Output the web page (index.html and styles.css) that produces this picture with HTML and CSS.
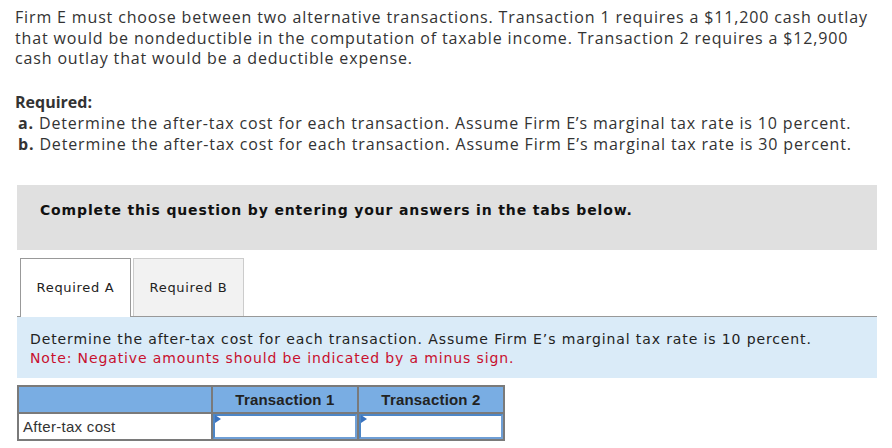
FILE: index.html
```html
<!DOCTYPE html>
<html lang="en">
<head>
    <meta charset="UTF-8">
    <title>Firm E - after-tax cost</title>
    <link rel="stylesheet" href="styles.css">
</head>
<body>
    <!-- Enunciado -->
    <div class="enunciado">
        <p class="texto">Firm E must choose between two alternative transactions. Transaction 1 requires a $11,200 cash outlay that would be nondeductible in the computation of taxable income. Transaction 2 requires a $12,900 cash outlay that would be a deductible expense.</p>

        <p class="requerido">Required:</p>
        <p class="item"><b>a.</b> Determine the after-tax cost for each transaction. Assume Firm E’s marginal tax rate is 10 percent.</p>
        <p class="item"><b>b.</b> Determine the after-tax cost for each transaction. Assume Firm E’s marginal tax rate is 30 percent.</p>
    </div>

    <div class="aviso">
        Complete this question by entering your answers in the tabs below.
    </div>

    <!-- Pestañas -->
    <div class="tabs">
        <button class="tab activa">Required A</button>
        <button class="tab">Required B</button>
    </div>

    <div class="panel">
        <p>Determine the after-tax cost for each transaction. Assume Firm E’s marginal tax rate is 10 percent.</p>
        <p class="nota">Note: Negative amounts should be indicated by a minus sign.</p>
    </div>

    <table class="tabla">
        <thead>
            <tr>
                <th class="col-label"></th>
                <th>Transaction 1</th>
                <th>Transaction 2</th>
            </tr>
        </thead>
        <tbody>
            <tr>
                <td class="col-label">After-tax cost</td>
                <td class="celda"><input type="text"></td>
                <td class="celda"><input type="text"></td>
            </tr>
        </tbody>
    </table>
</body>
</html>
```

FILE: styles.css
```css
body {
    margin: 0;
    padding: 7px 15px 0 15px;
    background: #fff;
    color: #333;
    font-family: 'Open Sans', sans-serif;
}

.enunciado p {
    margin: 0;
}

.texto {
    font-size: 16px;
    line-height: 20.5px;
    letter-spacing: 0.85px;
    width: 872px;
}

.requerido {
    font-weight: bold;
    font-size: 16px;
    margin-top: 22px !important;
    line-height: 22px;
}

.item {
    font-size: 16px;
    line-height: 21px;
    letter-spacing: 0.85px;
    padding-left: 3px;
}

.aviso {
    margin: 30px 0 0 2px;
    width: 860px;
    height: 65px;
    box-sizing: border-box;
    padding: 17px 0 0 23px;
    background: #e0e0e0;
    font-family: 'DejaVu Sans', Verdana, sans-serif;
    font-weight: bold;
    font-size: 14px;
    letter-spacing: 0.85px;
    color: #111;
}

.tabs {
    display: flex;
    gap: 2px;
    margin: 8px 0 0 5px;
}

.tab {
    width: 111px;
    height: 58px;
    border: 1px solid #ccc;
    border-bottom: none;
    background: #f2f2f2;
    font-family: 'DejaVu Sans', Verdana, sans-serif;
    font-size: 13px;
    letter-spacing: 0.7px;
    color: #222;
    padding: 0;
}

.tab.activa {
    background: #fff;
    border-color: #999;
    height: 59px;
    margin-bottom: -1px;
    position: relative;
}

.panel {
    margin-left: 2px;
    width: 860px;
    height: 62px;
    box-sizing: border-box;
    border-top: 1px solid #999;
    background: #daebf8;
    padding: 13px 0 0 13px;
    font-family: 'DejaVu Sans', Verdana, sans-serif;
    font-size: 14px;
    line-height: 19px;
    letter-spacing: 0.88px;
    color: #222;
}

.panel p {
    margin: 0;
}

.nota {
    color: #c8102e;
}

.tabla {
    margin: 7px 0 0 2px;
    border-collapse: collapse;
    font-family: 'Liberation Sans', Arial, sans-serif;
    font-size: 15px;
}

.tabla th,
.tabla td {
    border: 2px solid #7a7a7a;
    padding: 0;
}

.tabla th {
    background: #79ade3;
    height: 25px;
    width: 144px;
    color: #222;
    font-weight: bold;
    letter-spacing: 0.2px;
}

.tabla th.col-label {
    width: 192px;
}

.tabla td {
    height: 25px;
}

.tabla td.col-label {
    padding-left: 4px;
    color: #333;
    letter-spacing: 0.3px;
}

.celda {
    position: relative;
}

.celda input {
    display: block;
    width: 100%;
    height: 25px;
    box-sizing: border-box;
    border: 2px solid #4d86c6;
    border-color: #4d86c6 #6f9fd6 #6f9fd6 #4d86c6;
    outline: none;
    margin: 0;
}

.celda::before {
    content: '';
    position: absolute;
    top: 1px;
    left: 2px;
    border-top: 4px solid transparent;
    border-bottom: 4px solid transparent;
    border-left: 6px solid #3a73c0;
}
```
